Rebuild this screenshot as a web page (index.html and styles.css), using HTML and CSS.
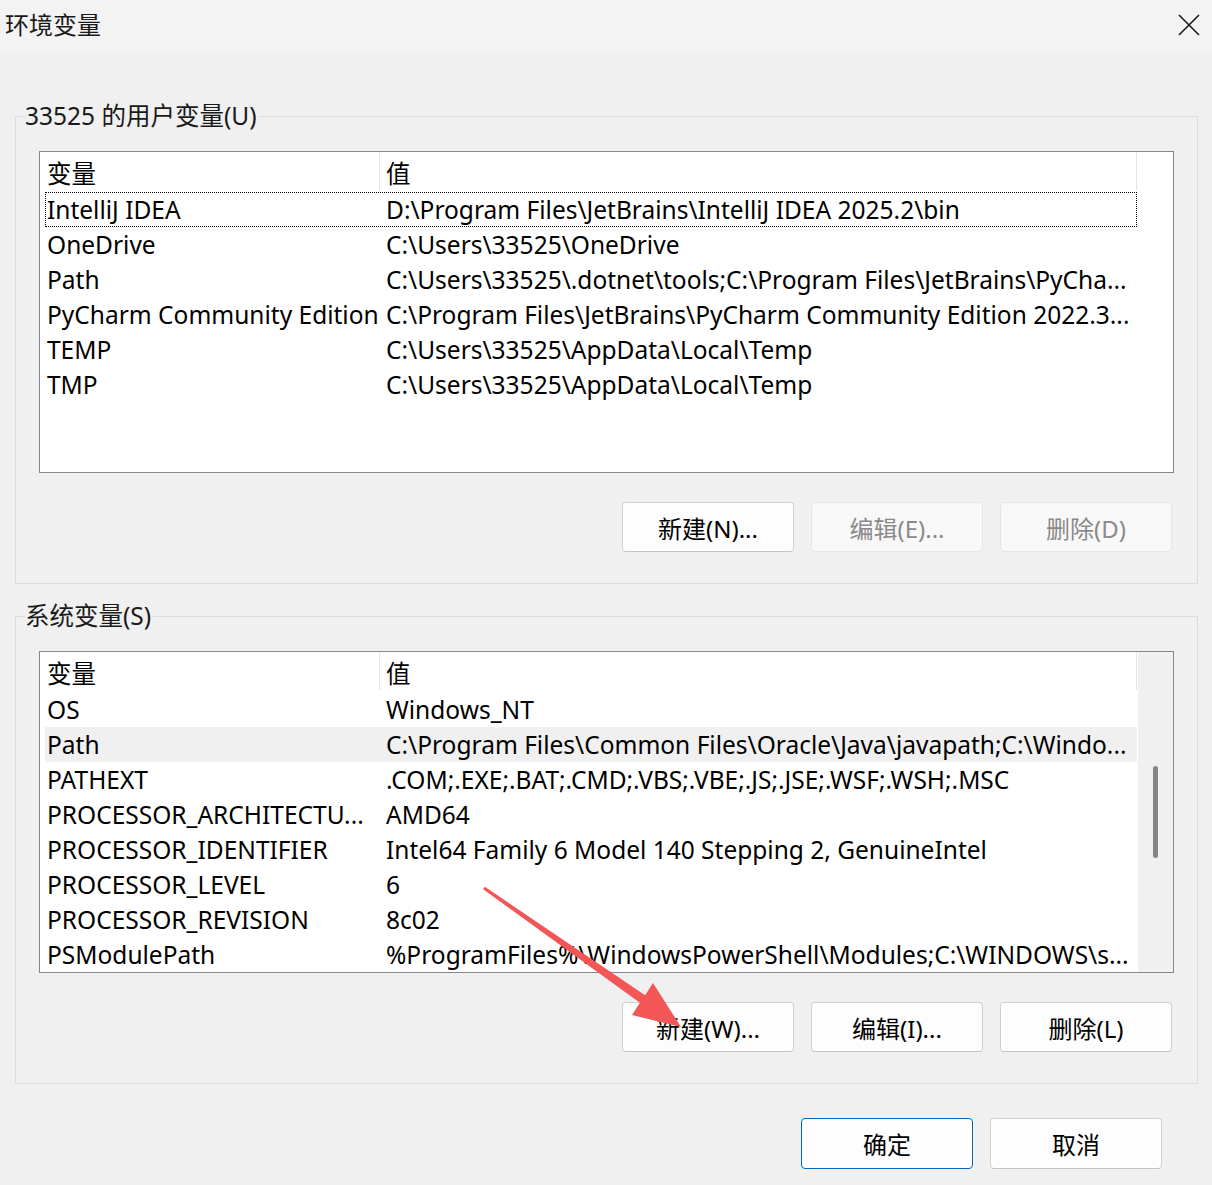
FILE: index.html
```html
<!DOCTYPE html>
<html lang="zh-CN">
<head>
  <meta charset="UTF-8">
  <meta name="viewport" content="width=device-width, initial-scale=1.0">
  <title>环境变量</title>
  <link rel="stylesheet" href="styles.css">
</head>
<body>
  <div class="window">
    <div class="titlebar">
      <div class="title">环境变量</div>
      <svg class="close" width="22" height="22" viewBox="0 0 22 22">
        <path d="M1 1 L21 21 M21 1 L1 21" stroke="#1a1a1a" stroke-width="1.6" fill="none"/>
      </svg>
    </div>

    <div class="content">
      <!-- 用户变量 -->
      <fieldset class="group">
        <legend>33525 的用户变量(U)</legend>
        <div class="list">
          <div class="rows">
            <div class="row head">
              <div class="cell name">变量</div>
              <div class="cell value">值</div>
            </div>
            <div class="row focus">
              <div class="cell name">IntelliJ IDEA</div>
              <div class="cell value">D:\Program Files\JetBrains\IntelliJ IDEA 2025.2\bin</div>
            </div>
            <div class="row">
              <div class="cell name">OneDrive</div>
              <div class="cell value">C:\Users\33525\OneDrive</div>
            </div>
            <div class="row">
              <div class="cell name">Path</div>
              <div class="cell value">C:\Users\33525\.dotnet\tools;C:\Program Files\JetBrains\PyCha...</div>
            </div>
            <div class="row">
              <div class="cell name">PyCharm Community Edition</div>
              <div class="cell value">C:\Program Files\JetBrains\PyCharm Community Edition 2022.3...</div>
            </div>
            <div class="row">
              <div class="cell name">TEMP</div>
              <div class="cell value">C:\Users\33525\AppData\Local\Temp</div>
            </div>
            <div class="row">
              <div class="cell name">TMP</div>
              <div class="cell value">C:\Users\33525\AppData\Local\Temp</div>
            </div>
          </div>
        </div>
        <div class="actions">
          <button class="btn">新建(N)...</button>
          <button class="btn" disabled>编辑(E)...</button>
          <button class="btn" disabled>删除(D)</button>
        </div>
      </fieldset>

      <!-- 系统变量 -->
      <fieldset class="group">
        <legend>系统变量(S)</legend>
        <div class="list">
          <div class="rows">
            <div class="row head">
              <div class="cell name">变量</div>
              <div class="cell value">值</div>
            </div>
            <div class="row">
              <div class="cell name">OS</div>
              <div class="cell value">Windows_NT</div>
            </div>
            <div class="row hover">
              <div class="cell name">Path</div>
              <div class="cell value">C:\Program Files\Common Files\Oracle\Java\javapath;C:\Windo...</div>
            </div>
            <div class="row">
              <div class="cell name">PATHEXT</div>
              <div class="cell value">.COM;.EXE;.BAT;.CMD;.VBS;.VBE;.JS;.JSE;.WSF;.WSH;.MSC</div>
            </div>
            <div class="row">
              <div class="cell name">PROCESSOR_ARCHITECTU...</div>
              <div class="cell value">AMD64</div>
            </div>
            <div class="row">
              <div class="cell name">PROCESSOR_IDENTIFIER</div>
              <div class="cell value">Intel64 Family 6 Model 140 Stepping 2, GenuineIntel</div>
            </div>
            <div class="row">
              <div class="cell name">PROCESSOR_LEVEL</div>
              <div class="cell value">6</div>
            </div>
            <div class="row">
              <div class="cell name">PROCESSOR_REVISION</div>
              <div class="cell value">8c02</div>
            </div>
            <div class="row">
              <div class="cell name">PSModulePath</div>
              <div class="cell value">%ProgramFiles%\WindowsPowerShell\Modules;C:\WINDOWS\s...</div>
            </div>
          </div>
          <div class="scrollbar"><div class="thumb"></div></div>
        </div>
        <div class="actions">
          <button class="btn">新建(W)...</button>
          <button class="btn">编辑(I)...</button>
          <button class="btn">删除(L)</button>
        </div>
      </fieldset>

      <div class="footer">
        <button class="btn primary">确定</button>
        <button class="btn">取消</button>
      </div>
    </div>

    <!-- 标注箭头 -->
    <svg class="arrow" width="220" height="160" viewBox="470 875 220 160">
      <polygon fill="#f35656" points="484.9,886.8 645.1,995.3 653,983 681,1027 632,1015 639.9,1002.7 483.1,889.2"/>
    </svg>
  </div>
</body>
</html>
```

FILE: styles.css
```css
body {
  margin: 0;
  background-color: #f0f0f0;
  font-family: "Noto Sans", "Noto Sans CJK SC", sans-serif;
  font-size: 24.5px;
  color: #000;
}
.window {
  position: relative;
  width: 1212px;
  height: 1185px;
  overflow: hidden;
}
.titlebar {
  height: 53px;
  background-color: #f3f3f3;
  display: flex;
  align-items: center;
  justify-content: space-between;
  padding: 0 12px 0 5px;
}
.title {
  font-size: 24px;
  color: #1a1a1a;
  margin-top: -7px;
}
.close {
  margin-top: -4px;
}
.content {
  padding: 46px 14px 0 15px;
}
.group {
  margin: 0 0 15px 0;
  padding: 18px 23px 31px 23px;
  border: 1px solid #dcdcdc;
  min-width: 0;
}
.group legend {
  margin-left: -14px;
  padding: 0 2px 0 0;
  line-height: 34px;
  color: #1a1a1a;
}
.list {
  height: 320px;
  border: 1px solid #828790;
  background-color: #fff;
  display: flex;
  overflow: hidden;
}
.rows {
  flex: 1;
  padding-left: 1px;
  min-width: 0;
}
.row {
  display: flex;
  height: 35px;
  line-height: 35px;
  width: 1092px;
  margin-left: 4px;
  box-sizing: border-box;
  white-space: nowrap;
}
.row.head {
  height: 40px;
  margin-left: 0;
  width: 1096px;
}
.cell {
  overflow: hidden;
}
.cell.name {
  width: 334px;
  padding-left: 2px;
  box-sizing: border-box;
}
.cell.value {
  flex: 1;
  padding-left: 7px;
}
.row.head .cell {
  height: 38px;
  line-height: 44px;
  border-right: 1px solid #e5e5e5;
}
.row.head .cell.name {
  width: 339px;
  padding-left: 6px;
}
.row.head .cell.value {
  padding-left: 6px;
}
.row.focus {
  outline: 1px dotted #000;
  outline-offset: -1px;
}
.row.hover {
  background-color: #f0f0f0;
}
.scrollbar {
  width: 35px;
  background-color: #f0f0f0;
  position: relative;
}
.thumb {
  position: absolute;
  left: 15px;
  top: 114px;
  width: 5px;
  height: 92px;
  border-radius: 3px;
  background-color: #858585;
}
.actions {
  display: flex;
  justify-content: flex-end;
  gap: 17px;
  margin-top: 29px;
  padding-right: 2px;
}
.btn {
  width: 172px;
  height: 50px;
  font-family: inherit;
  font-size: 24px;
  color: #000;
  background-color: #fdfdfd;
  border: 1px solid #d0d0d0;
  border-bottom-color: #c4c4c4;
  border-radius: 4px;
  padding: 0;
  cursor: pointer;
}
.btn:disabled {
  color: #8a8a8a;
  background-color: #f8f8f8;
  border-color: #e5e5e5;
}
.btn.primary {
  border: 1px solid #0067c0;
}
.footer {
  display: flex;
  justify-content: flex-end;
  gap: 17px;
  margin-top: 34px;
  padding-right: 36px;
}
.footer .btn {
  height: 51px;
}
.arrow {
  position: absolute;
  left: 470px;
  top: 875px;
  pointer-events: none;
}
```
